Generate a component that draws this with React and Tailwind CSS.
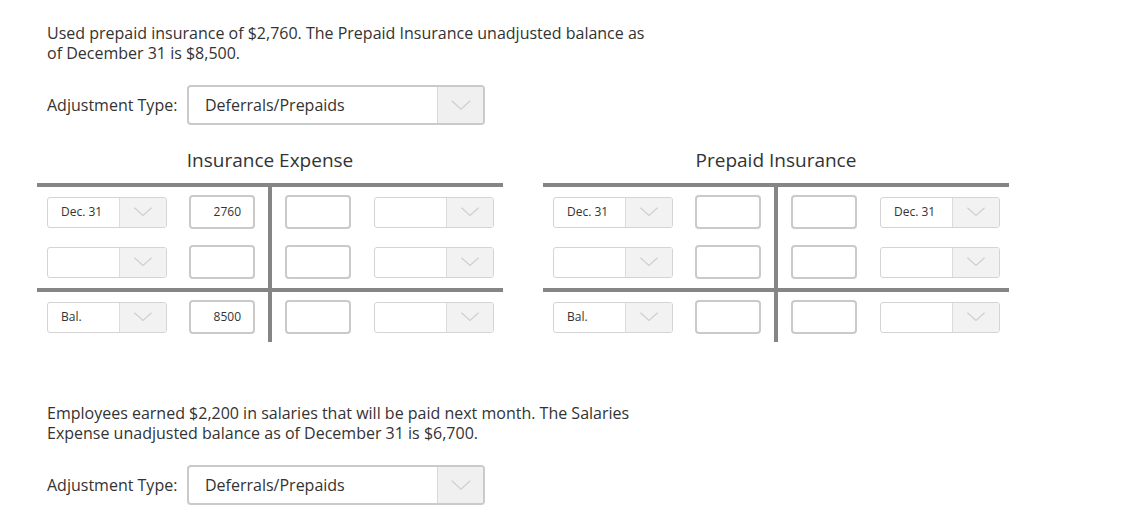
import React from "react";

const font = { fontFamily: '"Open Sans", "Noto Sans", sans-serif' };

function Chevron({ className }) {
  return (
    <svg className={className} viewBox="0 0 24 14" fill="none" stroke="#cfcfcf" strokeWidth="1.4">
      <path d="M2 2 L12 11 L22 2" />
    </svg>
  );
}

// small dropdown inside the T-accounts
function SmallSelect({ value }) {
  return (
    <div className="flex h-[31px] w-[120px] overflow-hidden rounded-[3px] border border-[#d4d4d4] bg-white">
      <div className="flex flex-1 items-center pl-[13px] text-[12px] text-[#333]">{value}</div>
      <div className="flex w-[47px] items-center justify-center border-l border-[#dcdcdc] bg-[#f2f2f2]">
        <Chevron className="w-[22px] h-[12px]" />
      </div>
    </div>
  );
}

function AmountInput({ value }) {
  return (
    <div className="flex h-[34px] w-[66px] items-center justify-end rounded-[4px] border-2 border-[#cacaca] bg-white pr-[12px] text-[12px] text-[#333]">
      {value}
    </div>
  );
}

function AdjustmentRow() {
  return (
    <div className="flex items-center">
      <span className="w-[140px] text-[16px] text-[#333]">Adjustment Type:</span>
      <div className="flex h-[40px] w-[298px] overflow-hidden rounded-[4px] border-2 border-[#cacaca] bg-white">
        <div className="flex flex-1 items-center pl-[16px] text-[16px] text-[#333]">Deferrals/Prepaids</div>
        <div className="flex w-[46px] items-center justify-center border-l border-[#d8d8d8] bg-[#f0f0f0]">
          <Chevron className="w-[24px] h-[13px]" />
        </div>
      </div>
    </div>
  );
}

function LeftCell({ date, amount }) {
  return (
    <div className="flex h-[34px] items-center">
      <div className="ml-[10px]">
        <SmallSelect value={date} />
      </div>
      <div className="ml-[22px]">
        <AmountInput value={amount} />
      </div>
    </div>
  );
}

function RightCell({ date, amount }) {
  return (
    <div className="flex h-[34px] items-center">
      <div className="ml-[13px]">
        <AmountInput value={amount} />
      </div>
      <div className="ml-[23px]">
        <SmallSelect value={date} />
      </div>
    </div>
  );
}

function TAccount({ title, rows }) {
  return (
    <div className="w-[466px]">
      <div className="text-center text-[19px] leading-[24px] text-[#333]">{title}</div>
      <div className="mt-[11px] h-[4px] bg-[#858585]" />
      <div className="flex">
        <div className="flex w-[231px] flex-col gap-[16px] pt-[8px] pb-[9px]">
          <LeftCell {...rows[0].left} />
          <LeftCell {...rows[1].left} />
        </div>
        <div className="w-[4px] bg-[#858585]" />
        <div className="flex w-[231px] flex-col gap-[16px] pt-[8px] pb-[9px]">
          <RightCell {...rows[0].right} />
          <RightCell {...rows[1].right} />
        </div>
      </div>
      <div className="h-[4px] bg-[#858585]" />
      <div className="flex">
        <div className="w-[231px] py-[8px]">
          <LeftCell {...rows[2].left} />
        </div>
        <div className="w-[4px] bg-[#858585]" />
        <div className="w-[231px] py-[8px]">
          <RightCell {...rows[2].right} />
        </div>
      </div>
    </div>
  );
}

const expenseRows = [
  { left: { date: "Dec. 31", amount: "2760" }, right: { date: "", amount: "" } },
  { left: { date: "", amount: "" }, right: { date: "", amount: "" } },
  { left: { date: "Bal.", amount: "8500" }, right: { date: "", amount: "" } },
];

const prepaidRows = [
  { left: { date: "Dec. 31", amount: "" }, right: { date: "Dec. 31", amount: "" } },
  { left: { date: "", amount: "" }, right: { date: "", amount: "" } },
  { left: { date: "Bal.", amount: "" }, right: { date: "", amount: "" } },
];

export default function App() {
  return (
    <div className="h-[525px] w-[1121px] overflow-hidden bg-white" style={font}>
      <div className="pl-[47px] pt-[23px]">
        <p className="text-[16px] leading-[20px] text-[#333]">
          Used prepaid insurance of $2,760. The Prepaid Insurance unadjusted balance as
          <br />
          of December 31 is $8,500.
        </p>
        <div className="mt-[22px]">
          <AdjustmentRow />
        </div>
      </div>

      <div className="ml-[37px] mt-[23px] flex gap-[40px]">
        <TAccount title="Insurance Expense" rows={expenseRows} />
        <TAccount title="Prepaid Insurance" rows={prepaidRows} />
      </div>

      <div className="pl-[47px] pt-[61px]">
        <p className="text-[16px] leading-[20px] text-[#333]">
          Employees earned $2,200 in salaries that will be paid next month. The Salaries
          <br />
          Expense unadjusted balance as of December 31 is $6,700.
        </p>
        <div className="mt-[22px]">
          <AdjustmentRow />
        </div>
      </div>
    </div>
  );
}
